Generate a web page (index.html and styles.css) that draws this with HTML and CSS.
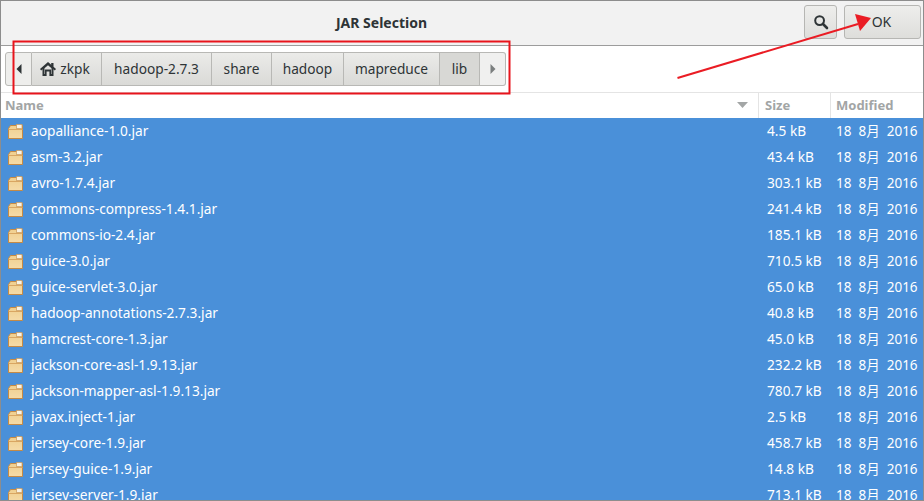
FILE: index.html
```html
<!DOCTYPE html>
<html lang="en">
<head>
<meta charset="utf-8">
<title>JAR Selection</title>
<link rel="stylesheet" href="styles.css">
</head>
<body>
<svg class="defs" width="0" height="0" aria-hidden="true">
  <defs>
    <linearGradient id="box" x1="0" y1="0" x2="0" y2="1">
      <stop offset="0" stop-color="#f0cf8e"/>
      <stop offset="1" stop-color="#f5dba8"/>
    </linearGradient>
    <symbol id="pkg" viewBox="0 0 15 15">
      <path d="M.5 4.5 L2.5 1.5 H14.5 V14.5 H.5 Z" fill="url(#box)" stroke="#c58a45" stroke-width="1"/>
      <path d="M.5 5.5 H14.5" stroke="#d9a662" stroke-width="1"/>
      <rect x="8.5" y="0.5" width="5.5" height="4" fill="#f8f3e6" stroke="#c9995c" stroke-width=".7"/>
    </symbol>
  </defs>
</svg>
<div class="window">
  <header class="titlebar">
    <div class="title">JAR Selection</div>
    <button class="btn btn-search" type="button" aria-label="Search">
      <svg width="16" height="16" viewBox="0 0 16 16"><circle cx="6.6" cy="6.6" r="4.4" fill="none" stroke="#2e3436" stroke-width="2"/><path d="M10 10 L14 14" stroke="#2e3436" stroke-width="2.6" stroke-linecap="round"/></svg>
    </button>
    <button class="btn btn-ok" type="button">OK</button>
  </header>
  <nav class="pathrow">
    <div class="pathbar">
      <button class="seg seg-arrow first" type="button" aria-label="Back">
        <svg width="6" height="10" viewBox="0 0 6 10"><path d="M5.5 0 V10 L0.5 5 Z" fill="#2e3436"/></svg>
      </button>
      <button class="seg seg-home" type="button">
        <svg width="16" height="14" viewBox="0 0 16 14"><path d="M8 0 L0 7 L1.2 8.4 L2.5 7.3 V14 H6.6 V9.4 H9.4 V14 H13.5 V7.3 L14.8 8.4 L16 7 L13.5 4.8 V1 H11.2 V2.8 Z M8 3.2 L11.5 6.2 V12 H11 V7.6 H5 V12 H4.5 V6.2 Z" fill="#2e3436" fill-rule="evenodd"/></svg>
        zkpk
      </button>
      <button class="seg seg-hadoop273" type="button">hadoop-2.7.3</button>
      <button class="seg seg-share" type="button">share</button>
      <button class="seg seg-hadoop" type="button">hadoop</button>
      <button class="seg seg-mapreduce" type="button">mapreduce</button>
      <button class="seg seg-lib" type="button">lib</button>
      <button class="seg seg-arrow last" type="button" aria-label="Forward">
        <svg width="6" height="10" viewBox="0 0 6 10"><path d="M.5 0 V10 L5.5 5 Z" fill="#7b7f7f"/></svg>
      </button>
    </div>
  </nav>
  <main class="list">
    <div class="head">
      <div class="hcell hname">Name<svg class="sort" width="11" height="6" viewBox="0 0 11 6"><path d="M0 0 H11 L5.5 6 Z" fill="#a3a6a6"/></svg></div>
      <div class="hcell hsize">Size</div>
      <div class="hcell hmod">Modified</div>
    </div>
    <div class="rows">
      <div class="row"><svg class="ico"><use href="#pkg"/></svg><span class="fname">aopalliance-1.0.jar</span><span class="fsize">4.5 kB</span><span class="fdate">18&nbsp; 8月&nbsp; 2016</span></div>
      <div class="row"><svg class="ico"><use href="#pkg"/></svg><span class="fname">asm-3.2.jar</span><span class="fsize">43.4 kB</span><span class="fdate">18&nbsp; 8月&nbsp; 2016</span></div>
      <div class="row"><svg class="ico"><use href="#pkg"/></svg><span class="fname">avro-1.7.4.jar</span><span class="fsize">303.1 kB</span><span class="fdate">18&nbsp; 8月&nbsp; 2016</span></div>
      <div class="row"><svg class="ico"><use href="#pkg"/></svg><span class="fname">commons-compress-1.4.1.jar</span><span class="fsize">241.4 kB</span><span class="fdate">18&nbsp; 8月&nbsp; 2016</span></div>
      <div class="row"><svg class="ico"><use href="#pkg"/></svg><span class="fname">commons-io-2.4.jar</span><span class="fsize">185.1 kB</span><span class="fdate">18&nbsp; 8月&nbsp; 2016</span></div>
      <div class="row"><svg class="ico"><use href="#pkg"/></svg><span class="fname">guice-3.0.jar</span><span class="fsize">710.5 kB</span><span class="fdate">18&nbsp; 8月&nbsp; 2016</span></div>
      <div class="row"><svg class="ico"><use href="#pkg"/></svg><span class="fname">guice-servlet-3.0.jar</span><span class="fsize">65.0 kB</span><span class="fdate">18&nbsp; 8月&nbsp; 2016</span></div>
      <div class="row"><svg class="ico"><use href="#pkg"/></svg><span class="fname">hadoop-annotations-2.7.3.jar</span><span class="fsize">40.8 kB</span><span class="fdate">18&nbsp; 8月&nbsp; 2016</span></div>
      <div class="row"><svg class="ico"><use href="#pkg"/></svg><span class="fname">hamcrest-core-1.3.jar</span><span class="fsize">45.0 kB</span><span class="fdate">18&nbsp; 8月&nbsp; 2016</span></div>
      <div class="row"><svg class="ico"><use href="#pkg"/></svg><span class="fname">jackson-core-asl-1.9.13.jar</span><span class="fsize">232.2 kB</span><span class="fdate">18&nbsp; 8月&nbsp; 2016</span></div>
      <div class="row"><svg class="ico"><use href="#pkg"/></svg><span class="fname">jackson-mapper-asl-1.9.13.jar</span><span class="fsize">780.7 kB</span><span class="fdate">18&nbsp; 8月&nbsp; 2016</span></div>
      <div class="row"><svg class="ico"><use href="#pkg"/></svg><span class="fname">javax.inject-1.jar</span><span class="fsize">2.5 kB</span><span class="fdate">18&nbsp; 8月&nbsp; 2016</span></div>
      <div class="row"><svg class="ico"><use href="#pkg"/></svg><span class="fname">jersey-core-1.9.jar</span><span class="fsize">458.7 kB</span><span class="fdate">18&nbsp; 8月&nbsp; 2016</span></div>
      <div class="row"><svg class="ico"><use href="#pkg"/></svg><span class="fname">jersey-guice-1.9.jar</span><span class="fsize">14.8 kB</span><span class="fdate">18&nbsp; 8月&nbsp; 2016</span></div>
      <div class="row"><svg class="ico"><use href="#pkg"/></svg><span class="fname">jersey-server-1.9.jar</span><span class="fsize">713.1 kB</span><span class="fdate">18&nbsp; 8月&nbsp; 2016</span></div>
    </div>
  </main>
</div>
<svg class="annot" width="924" height="501" viewBox="0 0 924 501" aria-hidden="true">
  <rect x="13.5" y="41.5" width="496" height="52" fill="none" stroke="#e8141c" stroke-width="2"/>
  <path d="M677.5 78 L858 24" stroke="#ea1c24" stroke-width="2" fill="none"/>
  <path d="M871 18 L855 14 L860 31 Z" fill="#ea1c24"/>
</svg>
</body>
</html>
```
FILE: styles.css
```css
* { box-sizing: border-box; }
html, body { margin: 0; padding: 0; }
body {
  width: 924px;
  height: 501px;
  overflow: hidden;
  position: relative;
  background: #fff;
  font-family: "Noto Sans", "Noto Sans CJK JP", sans-serif;
  font-size: 13.7px;
  color: #2e3436;
}
.defs { position: absolute; }
.window {
  height: 501px;
  display: flex;
  flex-direction: column;
  border: 1px solid #8d8d8d;
  overflow: hidden;
}
.titlebar {
  height: 45px;
  flex: none;
  display: flex;
  align-items: center;
  padding: 4px 2px 6px 0;
  background: #f2f2f2;
  border-bottom: 1px solid #9c9c9c;
}
.title {
  flex: 1;
  text-align: center;
  font-weight: 700;
  font-size: 14px;
  color: #2e3436;
  padding-right: 42px;
}
.btn {
  height: 34px;
  border: 1px solid #b6b6b3;
  border-radius: 3px;
  background: linear-gradient(#eeeeec, #dededb);
  font: inherit;
  color: #2e3436;
  padding: 0;
  display: flex;
  align-items: center;
  justify-content: center;
}
.btn-search { width: 33px; margin-right: 7px; }
.btn-ok { width: 77px; font-size: 14px; padding: 0 2px 2px 0; }
.pathrow {
  height: 47px;
  flex: none;
  background: #fff;
  border-bottom: 1px solid #e4e4e4;
  padding: 6px 0 0 4px;
}
.pathbar {
  display: flex;
  height: 34px;
  width: 500px;
}
.seg {
  height: 34px;
  border: 1px solid #b8b8b5;
  border-left: 0;
  background: linear-gradient(#ebebe9, #dadad7);
  font: inherit;
  font-size: 13.7px;
  color: #2e3436;
  padding: 0 0 1px;
  display: flex;
  align-items: center;
  justify-content: center;
  gap: 4px;
  flex: none;
}
.seg-arrow.first { width: 27px; border-left: 1px solid #b8b8b5; border-radius: 3px 0 0 3px; background: #eeeeec; }
.seg-arrow.last { width: 26px; border-radius: 0 3px 3px 0; background: #f0f0ef; }
.seg-home { width: 70px; padding-right: 3px; }
.seg-hadoop273 { width: 110px; }
.seg-share { width: 60px; }
.seg-hadoop { width: 72px; }
.seg-mapreduce { width: 96px; }
.seg-lib { width: 40px; background: #d8d8d5; }
.list {
  flex: 1;
  min-height: 0;
  display: flex;
  flex-direction: column;
  background: #fff;
}
.head {
  height: 25px;
  flex: none;
  display: flex;
  font-weight: 700;
  font-size: 13px;
  color: #a2a5a5;
  background: #fff;
}
.hcell {
  display: flex;
  align-items: center;
  padding: 0 0 1px 4px;
}
.hname { width: 757px; justify-content: space-between; padding-right: 7px; }
.hname .sort { margin-right: 3px; }
.hsize { width: 72px; padding-left: 6px; border-left: 1px solid #e4e4e4; }
.hmod { flex: 1; padding-left: 5px; border-left: 1px solid #e4e4e4; }
.rows {
  flex: 1;
  min-height: 0;
  overflow: hidden;
  background: #4a90d9;
  color: #fff;
}
.row {
  height: 26px;
  display: flex;
  align-items: center;
  padding-left: 7px;
  line-height: 18px;
}
.ico { width: 15px; height: 15px; flex: none; }
.fname { width: 744px; padding-left: 8px; white-space: nowrap; flex: none; }
.fsize { width: 69px; white-space: nowrap; flex: none; }
.fdate { white-space: nowrap; flex: none; font-size: 13.5px; }
.annot {
  position: absolute;
  left: 0;
  top: 0;
  pointer-events: none;
}
```
